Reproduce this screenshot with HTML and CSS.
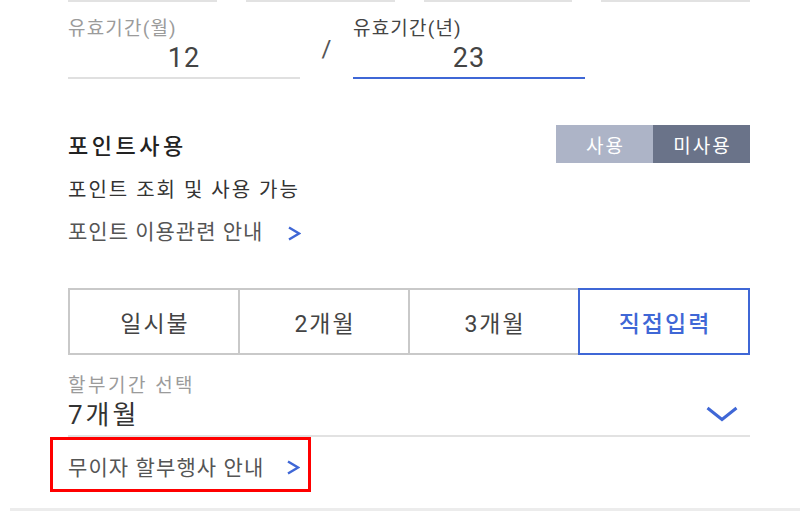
FILE: index.html
```html
<!DOCTYPE html>
<html lang="ko">
<head>
<meta charset="utf-8">
<title>결제 정보</title>
<link rel="stylesheet" href="styles.css">
</head>
<body>
<div class="page">
  <div class="card-row">
    <div class="card-seg"></div>
    <div class="card-seg"></div>
    <div class="card-seg"></div>
    <div class="card-seg"></div>
  </div>

  <div class="expiry">
    <div class="field">
      <div class="field-label">유효기간(월)</div>
      <div class="field-value">12</div>
    </div>
    <div class="slash">/</div>
    <div class="field field-active">
      <div class="field-label">유효기간(년)</div>
      <div class="field-value">23</div>
    </div>
  </div>

  <div class="point-head">
    <div class="point-title">포인트사용</div>
    <div class="toggle">
      <div class="toggle-btn toggle-on">사용</div>
      <div class="toggle-btn toggle-off">미사용</div>
    </div>
  </div>
  <div class="point-desc">포인트 조회 및 사용 가능</div>
  <div class="link">
    <span>포인트 이용관련 안내</span>
    <svg class="chev-right" width="14" height="15" viewBox="0 0 14 15"><polyline points="2,1.5 12,7.5 2,13.5" fill="none" stroke="#3f67d6" stroke-width="2.4"/></svg>
  </div>

  <div class="tabs">
    <div class="tab">일시불</div>
    <div class="tab">2개월</div>
    <div class="tab">3개월</div>
    <div class="tab tab-active">직접입력</div>
  </div>

  <div class="inst">
    <div class="inst-label">할부기간 선택</div>
    <div class="inst-row">
      <div class="inst-value">7개월</div>
      <svg class="chev-down" width="32" height="16" viewBox="0 0 32 16"><polyline points="1.5,2 16,13.5 30.5,2" fill="none" stroke="#3f67d6" stroke-width="3"/></svg>
    </div>
  </div>

  <div class="notice">
    <span>무이자 할부행사 안내</span>
    <svg class="chev-right" width="14" height="15" viewBox="0 0 14 15"><polyline points="2,1.5 12,7.5 2,13.5" fill="none" stroke="#3f67d6" stroke-width="2.4"/></svg>
  </div>

  <div class="bottom-line"></div>
</div>
</body>
</html>
```
FILE: styles.css
```css
* { box-sizing: border-box; }
html, body { margin: 0; padding: 0; background: #fff; }
body {
  font-family: Roboto, "Noto Sans CJK KR", "Noto Sans", sans-serif;
  color: #333;
  overflow: hidden;
}
.page {
  width: 800px;
  height: 512px;
  padding: 0 50px 0 68px;
}
.card-row { display: flex; gap: 29px; }
.card-seg { flex: 1; height: 2px; background: #e2e2e2; }

.expiry { display: flex; padding-top: 15px; }
.field { width: 232px; }
.field-label {
  font-size: 19px;
  line-height: 24px;
  color: #9b9b9b;
  letter-spacing: 1.2px;
}
.field-value {
  margin-top: 2px;
  font-size: 27px;
  line-height: 30px;
  color: #444;
  text-align: center;
  letter-spacing: 1px;
  padding-bottom: 4px;
  border-bottom: 2px solid #e0e0e0;
}
.field-active .field-label { color: #444; }
.field-active .field-value { border-bottom-color: #3f67d6; }
.slash {
  width: 53px;
  text-align: center;
  font-size: 24px;
  line-height: 30px;
  color: #555;
  margin-top: 17px;
}

.point-head {
  display: flex;
  justify-content: space-between;
  align-items: center;
  margin-top: 46px;
}
.point-title {
  font-size: 22px;
  font-weight: 500;
  color: #222;
  letter-spacing: 3.5px;
}
.toggle { display: flex; }
.toggle-btn {
  width: 97px;
  height: 38px;
  display: flex;
  align-items: center;
  justify-content: center;
  color: #fff;
  font-size: 19px;
  letter-spacing: 2px;
  padding-left: 2px;
}
.toggle-on { background: #adb4c7; }
.toggle-off { background: #6a7389; }

.point-desc {
  margin-top: 14px;
  font-size: 20px;
  line-height: 26px;
  color: #333;
  letter-spacing: 2px;
}
.link {
  display: flex;
  align-items: center;
  margin-top: 16px;
  font-size: 21px;
  line-height: 26px;
  color: #555;
  letter-spacing: 1px;
}
.link .chev-right { margin-left: 24px; margin-top: 3px; }

.tabs { display: flex; margin-top: 43px; }
.tab {
  flex: 1;
  height: 67px;
  border: 2px solid #c9c9c9;
  display: flex;
  align-items: center;
  justify-content: center;
  font-size: 23px;
  color: #444;
  letter-spacing: 2px;
  padding-left: 2px;
}
.tab + .tab { margin-left: -2px; }
.tab-active {
  border-color: #3f67d6;
  color: #3f67d6;
  font-weight: 500;
  position: relative;
  z-index: 1;
}

.inst {
  margin-top: 19px;
  padding-bottom: 6px;
  border-bottom: 2px solid #e2e2e2;
}
.inst-label {
  font-size: 19px;
  line-height: 24px;
  color: #9b9b9b;
  letter-spacing: 2.5px;
}
.inst-row {
  display: flex;
  justify-content: space-between;
  align-items: center;
  margin-top: 3px;
}
.inst-value {
  font-size: 26px;
  line-height: 28px;
  color: #333;
  letter-spacing: 3px;
}
.chev-down { margin-right: 12px; margin-bottom: 3px; }

.notice {
  display: flex;
  width: fit-content;
  align-items: center;
  height: 55px;
  margin-left: -18px;
  padding: 2px 8px 0 15px;
  border: 3px solid #ff0000;
  font-size: 21px;
  color: #555;
  letter-spacing: 1.1px;
}
.notice .chev-right { margin-left: 22px; margin-top: 3px; }

.bottom-line {
  margin-top: 16px;
  margin-left: -58px;
  margin-right: -50px;
  height: 3px;
  background: #ececec;
}
```
